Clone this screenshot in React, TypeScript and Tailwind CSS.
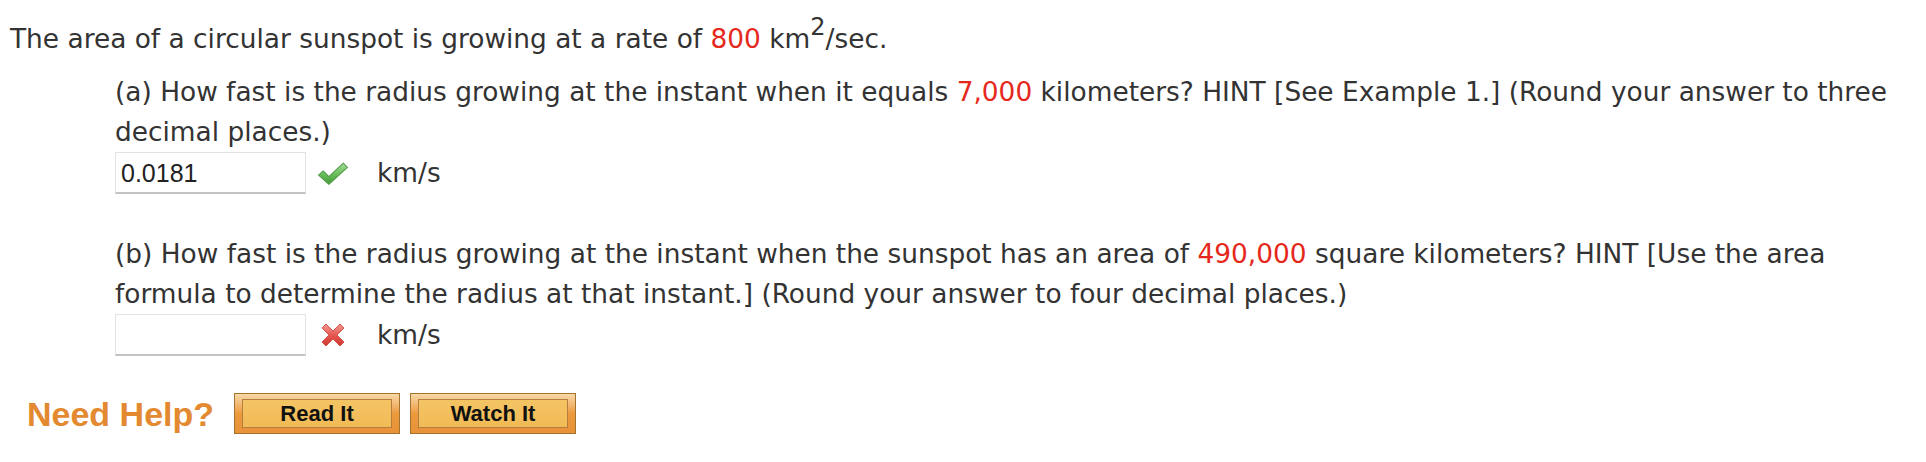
const Red = ({ children }: { children: React.ReactNode }) => (
  <span className="text-[#e5281b]">{children}</span>
);

const CheckMark = () => (
  <svg width="32" height="25" viewBox="0 0 31 24" className="shrink-0">
    <defs>
      <linearGradient id="chk" x1="0" y1="0" x2="0" y2="1">
        <stop offset="0" stopColor="#a6dc9a" />
        <stop offset="0.5" stopColor="#6cbf5e" />
        <stop offset="1" stopColor="#3f9a36" />
      </linearGradient>
    </defs>
    <path
      d="M1.5 13.5 L6 9.5 L11.5 15 L25.5 2 L29.5 6 L11.5 22.5 Z"
      fill="url(#chk)"
      stroke="#4f9a45"
      strokeWidth="1"
      strokeLinejoin="round"
    />
  </svg>
);

const CrossMark = () => (
  <svg width="28" height="28" viewBox="0 0 28 28" className="shrink-0">
    <defs>
      <linearGradient id="crs" x1="0" y1="0" x2="0" y2="1">
        <stop offset="0" stopColor="#f39a94" />
        <stop offset="0.55" stopColor="#e4534b" />
        <stop offset="1" stopColor="#cf3a33" />
      </linearGradient>
    </defs>
    <path
      d="M3 7 L7 3 L14 10 L21 3 L25 7 L18 14 L25 21 L21 25 L14 18 L7 25 L3 21 L10 14 Z"
      fill="url(#crs)"
      stroke="#d2554e"
      strokeWidth="1"
      strokeLinejoin="round"
    />
  </svg>
);

const AnswerRow = ({ value, correct }: { value: string; correct: boolean }) => (
  <div className="flex items-center h-[42px]">
    <div className="w-[191px] h-[42px] bg-white border border-[#e3e3e3] border-b-[2px] border-b-[#c4c4c4] flex items-center px-[5px] text-[25px] text-[#222] font-['Liberation_Sans',Arial,sans-serif]">
      {value}
    </div>
    <div className="ml-[11px] w-[31px] flex justify-center">
      {correct ? <CheckMark /> : <CrossMark />}
    </div>
    <span className="ml-[29px]">km/s</span>
  </div>
);

const HelpButton = ({ label }: { label: string }) => (
  <div className="w-[166px] h-[41px] border border-[#a4722f] bg-gradient-to-b from-[#f7d9a6] via-[#ec9a3c] to-[#e8913a] px-[7px] py-[5px]">
    <div className="h-full border border-[#b47f3e] bg-gradient-to-b from-[#f4c464] to-[#f1bb56] flex items-center justify-center text-[22px] font-bold text-[#111] font-['Liberation_Sans',Arial,sans-serif]">
      {label}
    </div>
  </div>
);

export default function App() {
  return (
    <div className="bg-white w-[1926px] h-[462px] pl-[10px] pt-[19px] text-[26.4px] leading-[40px] text-[#333] font-['DejaVu_Sans',Verdana,sans-serif]">
      <p>
        The area of a circular sunspot is growing at a rate of <Red>800</Red> km
        <span className="relative -top-[13px] text-[24px]">2</span>/sec.
      </p>

      <div className="ml-[105px] mt-[12px]">
        <p>
          (a) How fast is the radius growing at the instant when it equals <Red>7,000</Red> kilometers? HINT [See
          Example 1.] (Round your answer to three decimal places.)
        </p>
        <AnswerRow value="0.0181" correct />
      </div>

      <div className="ml-[105px] mt-[40px]">
        <p className="w-[1770px]">
          (b) How fast is the radius growing at the instant when the sunspot has an area of <Red>490,000</Red> square
          kilometers? HINT [Use the area formula to determine the radius at that instant.] (Round your answer to four
          decimal places.)
        </p>
        <AnswerRow value="" correct={false} />
      </div>

      <div className="flex items-center mt-[37px] ml-[17px]">
        <span className="text-[34px] font-bold text-[#e3892f] font-['Liberation_Sans',Arial,sans-serif] leading-none">
          Need Help?
        </span>
        <div className="ml-[20px] flex gap-[10px]">
          <HelpButton label="Read It" />
          <HelpButton label="Watch It" />
        </div>
      </div>
    </div>
  );
}
